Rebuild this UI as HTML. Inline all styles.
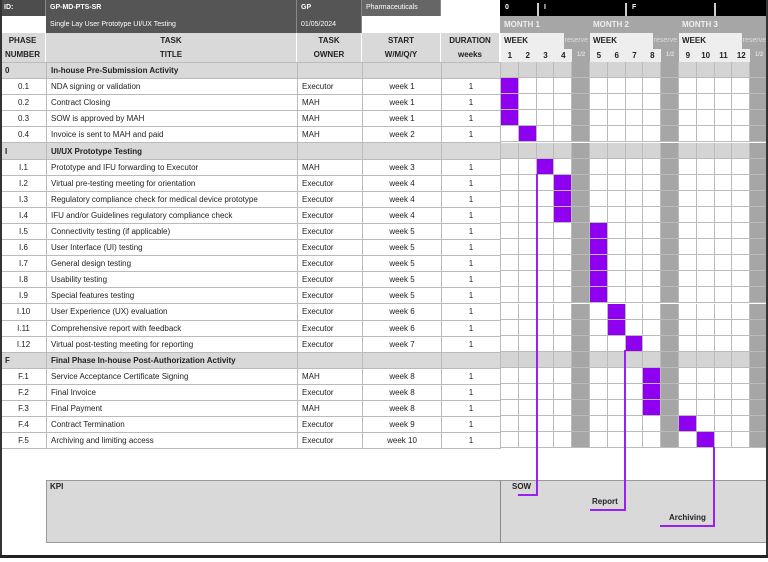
<!DOCTYPE html>
<html><head><meta charset="utf-8"><style>
*{margin:0;padding:0;box-sizing:border-box}
body{width:768px;height:562px;background:#fff;font-family:"Liberation Sans",sans-serif;font-size:8px;color:#222;position:relative;overflow:hidden}
.a{position:absolute;white-space:nowrap;line-height:16px}
.dk{background:#555;color:#fff;font-weight:bold;font-size:7px;padding-left:4px;border-right:1px solid #888}
table{position:absolute;left:0;top:62px;width:500px;border-collapse:collapse;table-layout:fixed}
td{height:16.1px;border:1px solid #bbb;padding:0 4px;font-size:8px;white-space:nowrap;overflow:hidden}
tr.s td{background:#d9d9d9;font-weight:bold}
td.c{text-align:center}
.hd{background:#d9d9d9;font-weight:bold;text-align:center;border-right:1px solid #fff}
.g{position:absolute}
</style></head><body>
<div class="a dk" style="left:0;top:0;width:46px;height:16px;background:#4d4d4d">ID:</div>
<div class="a dk" style="left:46px;top:0;width:251px;height:16px">GP-MD-PTS-SR</div>
<div class="a dk" style="left:297px;top:0;width:65px;height:16px">GP</div>
<div class="a dk" style="left:362px;top:0;width:79px;height:16px;background:#666;font-weight:normal">Pharmaceuticals</div>
<div class="a" style="left:500px;top:0;width:268px;height:16px;background:#000;color:#fff;font-weight:bold;font-size:7px">
<span style="position:absolute;left:5px">0</span><span style="position:absolute;left:37px;top:3px;width:2px;height:13px;background:#ccc"></span><span style="position:absolute;left:44px">I</span><span style="position:absolute;left:125px;top:3px;width:2px;height:13px;background:#ccc"></span><span style="position:absolute;left:132px">F</span><span style="position:absolute;left:214px;top:3px;width:2px;height:13px;background:#ccc"></span></div>
<div class="a dk" style="left:46px;top:16px;width:251px;height:17px;line-height:17px;font-weight:normal">Single Lay User Prototype UI/UX Testing</div>
<div class="a dk" style="left:297px;top:16px;width:65px;height:17px;line-height:17px;font-weight:normal">01/05/2024</div>
<div class="a hd" style="left:0;top:33px;width:46px;height:29px;line-height:14px;padding-top:1px">PHASE<br>NUMBER</div>
<div class="a hd" style="left:46px;top:33px;width:251px;height:29px;line-height:14px;padding-top:1px">TASK<br>TITLE</div>
<div class="a hd" style="left:297px;top:33px;width:65px;height:29px;line-height:14px;padding-top:1px">TASK<br>OWNER</div>
<div class="a hd" style="left:362px;top:33px;width:79px;height:29px;line-height:14px;padding-top:1px">START<br>W/M/Q/Y</div>
<div class="a hd" style="left:441px;top:33px;width:59px;height:29px;line-height:14px;padding-top:1px">DURATION<br>weeks</div>
<div class="a" style="left:500px;top:16px;width:268px;height:17px;background:#a6a6a6;color:#eee;font-weight:bold;line-height:17px">
<span style="position:absolute;left:4px">MONTH 1</span><span style="position:absolute;left:93px">MONTH 2</span><span style="position:absolute;left:182px">MONTH 3</span></div>
<div id="gh"></div>
<table>
<colgroup><col style="width:46px"><col style="width:251px"><col style="width:65px"><col style="width:79px"><col style="width:59px"></colgroup>
<tr class="s"><td>0</td><td>In-house Pre-Submission Activity</td><td></td><td></td><td></td></tr>
<tr><td class="c">0.1</td><td>NDA signing or validation</td><td>Executor</td><td class="c">week 1</td><td class="c">1</td></tr>
<tr><td class="c">0.2</td><td>Contract Closing</td><td>MAH</td><td class="c">week 1</td><td class="c">1</td></tr>
<tr><td class="c">0.3</td><td>SOW is approved by MAH</td><td>MAH</td><td class="c">week 1</td><td class="c">1</td></tr>
<tr><td class="c">0.4</td><td>Invoice is sent to MAH and paid</td><td>MAH</td><td class="c">week 2</td><td class="c">1</td></tr>
<tr class="s"><td>I</td><td>UI/UX Prototype Testing</td><td></td><td></td><td></td></tr>
<tr><td class="c">I.1</td><td>Prototype and IFU forwarding to Executor</td><td>MAH</td><td class="c">week 3</td><td class="c">1</td></tr>
<tr><td class="c">I.2</td><td>Virtual pre-testing meeting for orientation</td><td>Executor</td><td class="c">week 4</td><td class="c">1</td></tr>
<tr><td class="c">I.3</td><td>Regulatory compliance check for medical device prototype</td><td>Executor</td><td class="c">week 4</td><td class="c">1</td></tr>
<tr><td class="c">I.4</td><td>IFU and/or Guidelines regulatory compliance check</td><td>Executor</td><td class="c">week 4</td><td class="c">1</td></tr>
<tr><td class="c">I.5</td><td>Connectivity testing (if applicable)</td><td>Executor</td><td class="c">week 5</td><td class="c">1</td></tr>
<tr><td class="c">I.6</td><td>User Interface (UI)  testing</td><td>Executor</td><td class="c">week 5</td><td class="c">1</td></tr>
<tr><td class="c">I.7</td><td>General design testing</td><td>Executor</td><td class="c">week 5</td><td class="c">1</td></tr>
<tr><td class="c">I.8</td><td>Usability testing</td><td>Executor</td><td class="c">week 5</td><td class="c">1</td></tr>
<tr><td class="c">I.9</td><td>Special features testing</td><td>Executor</td><td class="c">week 5</td><td class="c">1</td></tr>
<tr><td class="c">I.10</td><td>User Experience (UX) evaluation</td><td>Executor</td><td class="c">week 6</td><td class="c">1</td></tr>
<tr><td class="c">I.11</td><td>Comprehensive report with feedback</td><td>Executor</td><td class="c">week 6</td><td class="c">1</td></tr>
<tr><td class="c">I.12</td><td>Virtual post-testing meeting for reporting</td><td>Executor</td><td class="c">week 7</td><td class="c">1</td></tr>
<tr class="s"><td>F</td><td>Final Phase In-house Post-Authorization Activity</td><td></td><td></td><td></td></tr>
<tr><td class="c">F.1</td><td>Service Acceptance Certificate Signing</td><td>MAH</td><td class="c">week 8</td><td class="c">1</td></tr>
<tr><td class="c">F.2</td><td>Final Invoice</td><td>Executor</td><td class="c">week 8</td><td class="c">1</td></tr>
<tr><td class="c">F.3</td><td>Final Payment</td><td>MAH</td><td class="c">week 8</td><td class="c">1</td></tr>
<tr><td class="c">F.4</td><td>Contract Termination</td><td>Executor</td><td class="c">week 9</td><td class="c">1</td></tr>
<tr><td class="c">F.5</td><td>Archiving and limiting access</td><td>Executor</td><td class="c">week 10</td><td class="c">1</td></tr>
</table>
<div id="gg"></div>
<div class="a" style="left:46px;top:480px;width:722px;height:63px;background:#d9d9d9;border:1px solid #999"></div>
<div class="a" style="left:500px;top:480px;width:1px;height:63px;background:#888"></div>
<div class="a" style="left:50px;top:481px;font-weight:bold;font-size:8px;line-height:12px">KPI</div>
<div class="a" style="left:512px;top:481px;font-weight:bold;line-height:12px">SOW</div>
<div class="a" style="left:592px;top:496px;font-weight:bold;line-height:12px">Report</div>
<div class="a" style="left:669px;top:512px;font-weight:bold;line-height:12px">Archiving</div>
<div class="a" style="left:536px;top:174px;width:2px;height:322px;background:#9b1ff0"></div>
<div class="a" style="left:518px;top:494px;width:20px;height:2px;background:#9b1ff0"></div>
<div class="a" style="left:624px;top:350px;width:2px;height:161px;background:#9b1ff0"></div>
<div class="a" style="left:590px;top:509px;width:36px;height:2px;background:#9b1ff0"></div>
<div class="a" style="left:713px;top:447px;width:2px;height:80px;background:#9b1ff0"></div>
<div class="a" style="left:660px;top:525px;width:55px;height:2px;background:#9b1ff0"></div>
<div class="a" style="left:0;top:0;width:2px;height:558px;background:#333"></div>
<div class="a" style="left:766px;top:0;width:2px;height:558px;background:#333"></div>
<div class="a" style="left:0;top:555px;width:768px;height:3px;background:#222"></div>
<script>
var x0=501,w=17.8,gh=document.getElementById('gh'),gg=document.getElementById('gg'),h='';
var wk=[1,2,3,4,0,5,6,7,8,0,9,10,11,12,0];
for(var i=0;i<15;i++){var x=x0+i*w,res=wk[i]==0;
 h+='<div class="g" style="left:'+x+'px;top:49px;width:'+w+'px;height:13px;background:'+(res?'#a6a6a6':'#eee')+';color:'+(res?'#ddd':'#222')+';font-weight:bold;font-size:'+(res?6:8)+'px;text-align:center;line-height:13px">'+(res?'':wk[i])+(res?'1/2':'')+'</div>';}
for(var m=0;m<3;m++){var x=x0+m*5*w;
 h+='<div class="g" style="left:'+x+'px;top:33px;width:'+(4*w)+'px;height:16px;background:#eee;font-weight:bold;line-height:16px;padding-left:3px">WEEK</div>';
 h+='<div class="g" style="left:'+(x+4*w-8)+'px;top:33px;width:'+(w+8)+'px;height:16px;background:#a6a6a6;color:#ddd;font-size:7px;line-height:16px;text-align:right;padding-right:2px">reserve</div>';}
gh.innerHTML=h;h='';
var sec=[0,5,18],bars={1:0,2:0,3:0,4:1,6:2,7:3,8:3,9:3,10:5,11:5,12:5,13:5,14:5,15:6,16:6,17:7,19:8,20:8,21:8,22:10,23:11};
for(var r=0;r<24;r++){var y=62+r*16.1,s=sec.indexOf(r)>=0;
 for(var i=0;i<15;i++){var x=x0+i*w,res=wk[i]==0,bg=res?'#a6a6a6':(s?'#d4d4d4':'#fff');
  if(bars[r]===i)bg='#9000f0';
  h+='<div class="g" style="left:'+x+'px;top:'+y+'px;width:'+w+'px;height:16.1px;background:'+bg+';border-right:1px solid #bbb;border-bottom:1px solid #bbb"></div>';}}
gg.innerHTML=h;
</script>
</body></html>
